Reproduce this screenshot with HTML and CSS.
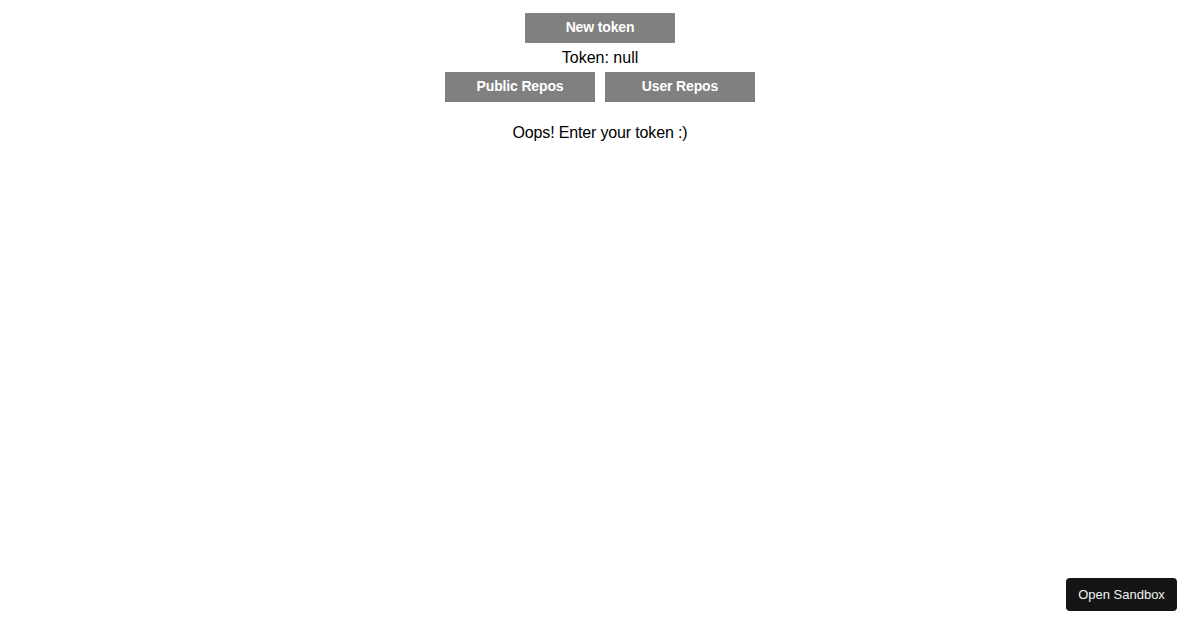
FILE: index.html
```html
<!DOCTYPE html>
<html>
<head>
<meta charset="utf-8">
<link rel="stylesheet" href="styles.css">
</head>
<body>
<div class="app">
  <button class="btn">New token</button>
  <div class="token">Token: null</div>
  <div class="row">
    <button class="btn">Public Repos</button>
    <button class="btn">User Repos</button>
  </div>
  <p class="msg">Oops! Enter your token :)</p>
</div>
<a class="sandbox">Open Sandbox</a>
</body>
</html>
```
FILE: styles.css
```css
html, body {
  margin: 0;
  padding: 0;
  background: #fff;
}
body {
  padding: 8px;
  font-family: "Liberation Sans", Arial, sans-serif;
  color: #000;
}
.app {
  display: flex;
  flex-direction: column;
  align-items: center;
}
.btn {
  width: 150px;
  height: 30px;
  margin: 5px;
  border: none;
  background: #808080;
  color: #fff;
  font-family: "Liberation Sans", Arial, sans-serif;
  font-weight: bold;
  font-size: 14px;
  letter-spacing: -0.15px;
  padding: 0 0 2px 0;
}
.token {
  font-size: 16px;
  line-height: 18px;
  padding-top: 1px;
}
.row {
  display: flex;
}
.msg {
  font-size: 16px;
  line-height: 18px;
  letter-spacing: -0.15px;
  margin: 17px 0 15px;
}
.sandbox {
  position: fixed;
  right: 23px;
  bottom: 19px;
  width: 111px;
  height: 33px;
  display: flex;
  align-items: center;
  justify-content: center;
  background: #151515;
  color: #f2f2f2;
  border-radius: 4px;
  font-size: 13px;
  font-family: "Liberation Sans", Arial, sans-serif;
  box-sizing: border-box;
}
```
